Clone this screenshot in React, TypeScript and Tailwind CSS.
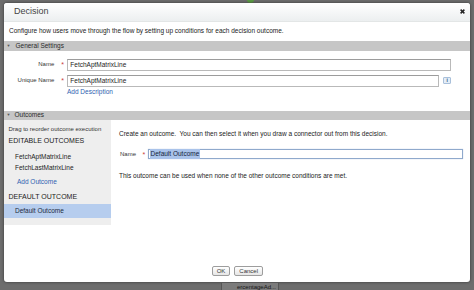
import React from "react";

const SectionHeader = ({ title, height, textPad }: { title: string; height: string; textPad: string }) => (
    <div className={`${height} flex items-center bg-[#c6c6c6] pl-[2.5px] text-[6.5px] text-[#2b2b2b]`}>
        <span className="text-[4px] leading-none text-[#555]">▼</span>
        <span className={textPad}>{title}</span>
    </div>
);

const Asterisk = () => <span className="w-[12.5px] pl-[7px] text-[7px] leading-none text-[#c8403a]">*</span>;

const Field = ({ label, value, width }: { label: string; value: string; width: string }) => (
    <div className="flex h-[11.7px] items-center">
        <span className="w-[50.3px] text-right text-[6px] text-[#333]">{label}</span>
        <Asterisk />
        <div className={`${width} flex h-full items-center border border-[#b9b9b9] border-t-[#9c9c9c] pl-[2.5px] text-[6.5px] text-[#222]`}>
            {value}
        </div>
    </div>
);

export default function App() {
    return (
        <div className="h-[290px] w-[474px] overflow-hidden bg-[#6d6d6d] font-['Liberation_Sans',Arial,sans-serif] text-[#222]">
            {/* node peeking out behind the dialog */}
            <div className="h-[3px] overflow-hidden pl-[247px]">
                <div className="-mt-[4px] h-[7px] w-[7px] rounded-full bg-[#5a9a44]" />
            </div>

            <div className="ml-[4px] flex h-[279px] w-[466px] flex-col overflow-hidden rounded-[3px] bg-white shadow-[0_0_3px_rgba(0,0,0,0.55)]">
                {/* title */}
                <div className="flex h-[19px] items-center justify-between border-b border-[#e3e6e6] bg-gradient-to-b from-white to-[#eceff0] pl-[10px] pr-[5px]">
                    <span className="text-[9px] text-[#444]">Decision</span>
                    <svg width="5" height="5" viewBox="0 0 5 5" className="mb-[1px]">
                        <path d="M0.6 0.6 L4.4 4.4 M4.4 0.6 L0.6 4.4" stroke="#262626" strokeWidth="1.5" />
                    </svg>
                </div>

                <div className="flex h-[18.7px] items-center pl-[5px] text-[6.5px] text-[#222]">
                    Configure how users move through the flow by setting up conditions for each decision outcome.
                </div>

                <SectionHeader title="General Settings" height="h-[10px]" textPad="pl-[5px]" />

                <div className="flex h-[60px] flex-col pt-[8.3px]">
                    <Field label="Name" value="FetchAptMatrixLine" width="w-[384px]" />
                    <div className="mt-[4.3px] flex items-center">
                        <Field label="Unique Name" value="FetchAptMatrixLine" width="w-[372px]" />
                        <div className="ml-[4.5px] flex h-[7px] w-[8px] items-center justify-center rounded-[1px] border border-[#a9c0da] bg-[#e4edf8] text-[5px] font-bold leading-none text-[#2b4d7a]">
                            i
                        </div>
                    </div>
                    <div className="ml-[63px] mt-[1.3px] h-[8px] text-[6.5px] leading-[8px] text-[#2e62b0]">Add Description</div>
                </div>

                <SectionHeader title="Outcomes" height="h-[9px]" textPad="pl-[4px]" />

                <div className="flex h-[105px]">
                    {/* outcome list */}
                    <div className="flex w-[107px] flex-col bg-[#eeeeee] pt-[5px] text-[6.5px]">
                        <div className="flex h-[10px] items-center pl-[4.5px] text-[6px] text-[#333]">Drag to reorder outcome execution</div>
                        <div className="flex h-[13px] items-center pl-[4.5px] text-[7px] text-[#222]">EDITABLE OUTCOMES</div>
                        <div className="mt-[4px] flex h-[11px] items-center pl-[11px]">FetchAptMatrixLine</div>
                        <div className="flex h-[11px] items-center pl-[11px]">FetchLastMatrixLine</div>
                        <div className="flex h-[17px] items-center pl-[13px] text-[#2e62b0]">Add Outcome</div>
                        <div className="flex h-[13px] items-center pl-[4.5px] text-[7px] text-[#222]">DEFAULT OUTCOME</div>
                        <div className="flex h-[14px] items-center bg-[#b6cdee] pl-[11px] text-[#1d2a3d]">Default Outcome</div>
                    </div>

                    {/* outcome detail */}
                    <div className="flex flex-1 flex-col pl-[8px] pt-[9px] text-[6.5px]">
                        <div className="flex h-[10px] items-center">
                            Create an outcome.&nbsp; You can then select it when you draw a connector out from this decision.
                        </div>
                        <div className="mt-[10.2px] flex h-[10.5px] items-center">
                            <span className="pl-[1px] text-[6px] text-[#333]">Name</span>
                            <span className="w-[11.5px] pl-[6.5px] text-[7px] leading-none text-[#c8403a]">*</span>
                            <div className="flex h-full w-[315.5px] items-center border border-[#8fa9cc] pl-[1.5px] shadow-[0_0_1px_#b9cbe4]">
                                <span className="bg-[#a9c3ea] px-[0.5px] text-[#14243a]">Default Outcome</span>
                            </div>
                        </div>
                        <div className="mt-[11px] flex h-[10px] items-center">
                            This outcome can be used when none of the other outcome conditions are met.
                        </div>
                    </div>
                </div>

                <div className="flex-1" />

                <div className="mb-[5.7px] flex h-[10px] justify-center gap-[4px] pl-[1px] text-[6px] text-[#333]">
                    <button className="flex w-[18.3px] items-center justify-center rounded-[2px] border border-[#9d9d9d] bg-gradient-to-b from-white to-[#e6e6e6]">
                        OK
                    </button>
                    <button className="flex w-[29px] items-center justify-center rounded-[2px] border border-[#9d9d9d] bg-gradient-to-b from-white to-[#e6e6e6]">
                        Cancel
                    </button>
                </div>
            </div>

            {/* flow node behind the dialog */}
            <div className="ml-[221px] mt-[1px] flex h-[10px] w-[58px] items-start border-x border-[#555] bg-[#7b7b7b] pl-[15px] pt-[1px] text-[6px] leading-[7px] text-[#151515]">
                ercentageAd...
            </div>
        </div>
    );
}
